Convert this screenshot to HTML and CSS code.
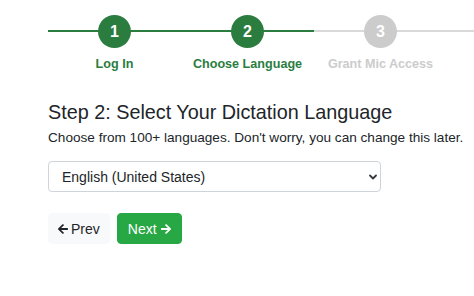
FILE: index.html
```html
<!DOCTYPE html>
<html lang="en">
<head>
<meta charset="utf-8">
<title>Step 2</title>
<link rel="stylesheet" href="styles.css">
</head>
<body>
<div class="page">
  <div class="stepper">
    <div class="step done">
      <div class="circle">1</div>
      <div class="label">Log In</div>
    </div>
    <div class="step current">
      <div class="circle">2</div>
      <div class="label">Choose Language</div>
    </div>
    <div class="step todo">
      <div class="circle">3</div>
      <div class="label">Grant Mic Access</div>
    </div>
    <div class="tail"></div>
  </div>

  <h2 class="title">Step 2: Select Your Dictation Language</h2>
  <p class="sub">Choose from 100+ languages. Don't worry, you can change this later.</p>

  <div class="select-wrap">
    <select class="select">
      <option>English (United States)</option>
    </select>
    <svg class="chev" width="8" height="6" viewBox="0 0 8 6"><path d="M1 1.5 L4 4.5 L7 1.5" fill="none" stroke="#343a40" stroke-width="1.8" stroke-linecap="round" stroke-linejoin="round"/></svg>
  </div>

  <div class="actions">
    <button class="btn btn-light">
      <svg class="ico" viewBox="0 0 448 512"><path fill="currentColor" d="M257.5 445.1l-22.2 22.2c-9.4 9.4-24.6 9.4-33.9 0L7 273c-9.4-9.4-9.4-24.6 0-33.9L201.4 44.7c9.4-9.4 24.6-9.4 33.9 0l22.2 22.2c9.5 9.5 9.3 25-.4 34.3L136.6 216H424c13.3 0 24 10.7 24 24v32c0 13.3-10.7 24-24 24H136.6l120.5 114.8c9.8 9.3 10 24.8.4 34.3z"/></svg>
      <span>Prev</span>
    </button>
    <button class="btn btn-success">
      <span>Next</span>
      <svg class="ico" viewBox="0 0 448 512"><path fill="currentColor" d="M190.5 66.9l22.2-22.2c9.4-9.4 24.6-9.4 33.9 0L441 239c9.4 9.4 9.4 24.6 0 33.9L246.6 467.3c-9.4 9.4-24.6 9.4-33.9 0l-22.2-22.2c-9.5-9.5-9.3-25 .4-34.3L311.4 296H24c-13.3 0-24-10.7-24-24v-32c0-13.3 10.7-24 24-24h287.4L190.9 101.2c-9.8-9.3-10-24.8-.4-34.3z"/></svg>
    </button>
  </div>
</div>
</body>
</html>
```

FILE: styles.css
```css
html, body {
  margin: 0;
  padding: 0;
  background: #ffffff;
}

body {
  font-family: "Liberation Sans", Arial, Helvetica, sans-serif;
  color: #212529;
}

.page {
  padding-left: 48px;
}

.stepper {
  display: grid;
  grid-template-columns: 133px 133px 133px 1fr;
  padding-top: 15px;
}

.step {
  display: flex;
  flex-direction: column;
  align-items: center;
  background-repeat: no-repeat;
  background-position: 0 15px;
  background-size: 100% 2px;
}

.step.done,
.step.current {
  background-image: linear-gradient(#2b7d3f, #2b7d3f);
}

.step.todo {
  background-image: linear-gradient(#d9d9d9, #d9d9d9);
}

.tail {
  background-image: linear-gradient(#d9d9d9, #d9d9d9);
  background-repeat: no-repeat;
  background-position: 0 15px;
  background-size: 100% 2px;
}

.circle {
  width: 33px;
  height: 33px;
  border-radius: 50%;
  color: #ffffff;
  font-size: 16px;
  font-weight: bold;
  line-height: 33px;
  text-align: center;
}

.done .circle,
.current .circle {
  background: #2b7d3f;
}

.todo .circle {
  background: #cccccc;
}

.label {
  margin-top: 9px;
  font-size: 12.6px;
  font-weight: bold;
  line-height: 14px;
  white-space: nowrap;
}

.done .label,
.current .label {
  color: #2b7d3f;
}

.todo .label {
  color: #cccccc;
}

.title {
  margin: 29px 0 0;
  font-size: 19.8px;
  font-weight: normal;
  line-height: 24px;
  color: #212529;
}

.sub {
  margin: 4px 0 0;
  font-size: 13.6px;
  line-height: 20px;
  white-space: nowrap;
}

.select-wrap {
  position: relative;
  width: 333px;
  margin-top: 13px;
}

.select {
  display: block;
  width: 333px;
  height: 31px;
  padding: 0 24px 0 13px;
  border: 1px solid #ced4da;
  border-radius: 4px;
  background: #ffffff;
  font-family: inherit;
  font-size: 14px;
  color: #212529;
  appearance: none;
  -webkit-appearance: none;
  box-sizing: border-box;
}

.chev {
  position: absolute;
  right: 4px;
  top: 13px;
}

.actions {
  display: flex;
  gap: 7px;
  margin-top: 21px;
}

.btn {
  display: flex;
  align-items: center;
  height: 31px;
  border: 1px solid transparent;
  border-radius: 4px;
  font-family: inherit;
  font-size: 14px;
  box-sizing: border-box;
}

.btn-light {
  gap: 3px;
  padding: 0 9px;
  background: #f8f9fa;
  border-color: #f8f9fa;
  color: #212529;
}

.btn-success {
  gap: 4px;
  padding: 0 10px;
  background: #28a745;
  border-color: #28a745;
  color: #ffffff;
}

.ico {
  width: 10px;
  height: 12px;
}
```
